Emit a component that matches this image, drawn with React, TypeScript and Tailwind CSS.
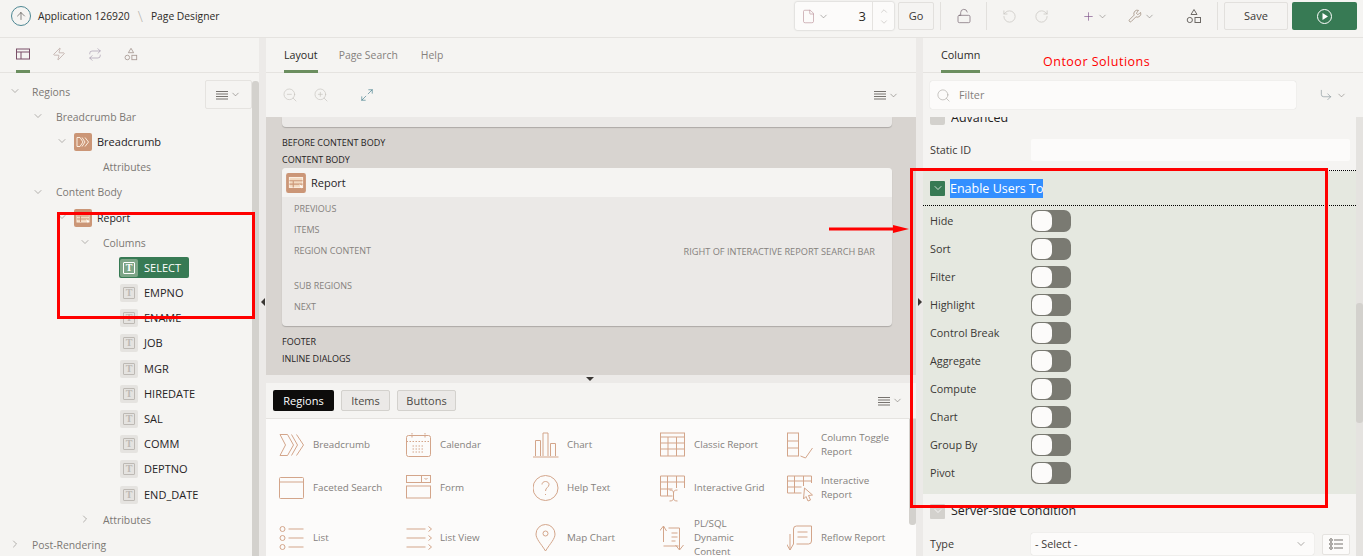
import React from "react";
import { ChevronDown, ChevronRight, ChevronUp, Search, RotateCcw, RotateCw, Plus, Wrench, LockOpen, File, ZoomIn, ZoomOut, Maximize2, Zap, Repeat, ArrowUp, CornerDownRight } from "lucide-react";

const Shapes = ({ c = "#7a7672" }: { c?: string }) => (
  <svg width="16" height="16" viewBox="0 0 16 16" fill="none" stroke={c} strokeWidth="1">
    <path d="M8 1.5 L11 6.5 H5 Z" />
    <circle cx="3.8" cy="12" r="2.6" />
    <rect x="9" y="9.5" width="5.5" height="5" />
  </svg>
);

const Hamburger = () => (
  <svg width="12" height="10" viewBox="0 0 12 10" stroke="#77736f" strokeWidth="1">
    <path d="M0 1.5H12M0 4H12M0 6.5H12M0 9H12" />
  </svg>
);

const MenuBtn = () => (
  <span className="flex items-center gap-[2px]">
    <Hamburger />
    <ChevronDown size={11} color="#77736f" strokeWidth={1.3} />
  </span>
);

const TreeTab = ({ active, children }: { active?: boolean; children: React.ReactNode }) => (
  <div className={`h-[35px] w-[14px] flex items-center justify-center border-b-[3px] ${active ? "border-[#6b8e5f]" : "border-transparent"}`}>{children}</div>
);

const RegionIcon = ({ kind }: { kind: "crumb" | "report" }) => (
  <span className="w-[18px] h-[18px] rounded-[2px] bg-[#cb9677] flex items-center justify-center shrink-0">
    {kind === "crumb" ? (
      <svg width="14" height="12" viewBox="0 0 14 12" fill="none" stroke="#fbeee0" strokeWidth="1">
        <path d="M1 1.5H4L7 6L4 10.5H1V1.5ZM6 1.5L9 6L6 10.5M9 1.5L12.5 6L9 10.5" />
      </svg>
    ) : (
      <svg width="14" height="12" viewBox="0 0 14 12" fill="none" stroke="#fbeee0" strokeWidth="1">
        <rect x="1" y="1" width="12" height="9" fill="#f2d9c0" />
        <path d="M1 4H13M1 7H13M4.5 4V10" stroke="#cb9677" />
        <path d="M10 7L13.5 10L11.5 10.2L12 12L10 7Z" fill="#fff" stroke="none" />
      </svg>
    )}
  </span>
);

const TIcon = ({ active }: { active?: boolean }) => (
  <span className={`w-[18px] h-[18px] rounded-[2px] flex items-center justify-center shrink-0 ${active ? "bg-[#7da587]" : "bg-[#e5e3e0]"}`}>
    <span className={`w-[12px] h-[12px] border rounded-[1px] flex items-center justify-center text-[10px] leading-none font-['Liberation_Serif',serif] font-bold ${active ? "border-white text-white" : "border-[#bdb9b4] text-[#bdb9b4]"}`}>T</span>
  </span>
);

const Row = ({ pl, caret, cx = 0, children }: { pl: number; caret?: "down" | "right"; cx?: number; children: React.ReactNode }) => (
  <div className="h-[25.2px] flex items-center relative" style={{ paddingLeft: pl }}>
    {caret && (
      <span className="absolute top-[6px]" style={{ left: cx - 6 }}>
        {caret === "down" ? <ChevronDown size={12} color="#85817d" strokeWidth={1.2} /> : <ChevronRight size={12} color="#85817d" strokeWidth={1.2} />}
      </span>
    )}
    {children}
  </div>
);

const Lbl = ({ children }: { children: React.ReactNode }) => <span className="text-[10.4px] text-[#7c7874]">{children}</span>;
const Dark = ({ children }: { children: React.ReactNode }) => <span className="text-[11px] text-[#26231f]">{children}</span>;

const columns = ["EMPNO", "ENAME", "JOB", "MGR", "HIREDATE", "SAL", "COMM", "DEPTNO", "END_DATE"];
const toggles = ["Hide", "Sort", "Filter", "Highlight", "Control Break", "Aggregate", "Compute", "Chart", "Group By", "Pivot"];

const S = { fill: "none", stroke: "#d3a58a", strokeWidth: 1 };
const G = ({ children }: { children: React.ReactNode }) => (
  <svg width="26" height="28" viewBox="1.5 0 26 28" className="shrink-0" {...S}>{children}</svg>
);

const icons: Record<string, React.ReactNode> = {
  Breadcrumb: <G><path d="M2.5 3.5H10L16 14L10 24.5H2.5L8 14ZM14 3.5L20 14L14 24.5M19 3.5L26 14L19 24.5" /></G>,
  Calendar: <G><rect x="2" y="4.5" width="24" height="21" rx="2" /><path d="M2 10.5H26M7.5 2V7M20.5 2V7M8 15H20M8 18H20M8 21H20" strokeDasharray="1.5 1.5" /></G>,
  Chart: <G><path d="M1 26H27M4 25V9.5H9V25M11.5 25V2H16.5V25M19 25V12.5H24V25" /></G>,
  "Classic Report": <G><rect x="2" y="2" width="24" height="23" /><path d="M2 6H26M2 12H26M2 18H26M9.5 6V25M18 6V25" /></G>,
  "Faceted Search": <G><rect x="2" y="3.5" width="24" height="21" rx="1" /><path d="M2 8H26" /></G>,
  Form: <G><rect x="2" y="1.5" width="24" height="7" /><path d="M17 1.5V8.5M20 4L21.5 5.5L23 4" /><rect x="2" y="12" width="24" height="12" /></G>,
  "Help Text": <G><circle cx="14" cy="14" r="12.5" /><path d="M10.5 10.5C10.5 6.5 17.5 6.5 17.5 10.5C17.5 13.5 14 13.5 14 17M14 20V21" /></G>,
  "Interactive Grid": <G><path d="M2 2H26V14M2 2V22H14M2 8H26M2 15H14M9 2V22M18 2V14M11 16C14 16 15 17 15 19C15 17 16 16 19 16M11 27C14 27 15 26 15 24C15 26 16 27 19 27M15 19V24" /></G>,
  List: <G><circle cx="5" cy="5" r="2.5" /><circle cx="5" cy="14" r="2.5" /><circle cx="5" cy="23" r="2.5" /><path d="M11 5H26M11 14H26M11 23H26" /></G>,
  "List View": <G><path d="M2 5H21M2 14H21M2 23H21M24 2.5L27 5L24 7.5M24 11.5L27 14L24 16.5M24 20.5L27 23L24 25.5" /></G>,
  "Map Chart": <G><path d="M14 27C9 19 4.5 15 4.5 10A9.5 9.5 0 0 1 23.5 10C23.5 15 19 19 14 27Z" /><circle cx="14" cy="9.5" r="2.5" /></G>,
  "Reflow Report": <G><path d="M8 20V5A3 3 0 0 1 11 2H26V17A3 3 0 0 1 23 20H11M12 8H22M12 13H22M1 20L4.5 26L8 20M4.5 10V26" /></G>,
};
const iconsRight: Record<string, React.ReactNode> = {
  "PL/SQL": <G><path d="M1 7L5 2L8 7M5 2V18M10 4H21V19M5 22H20M13 9H19M13 13H19M13 17H17M17 21L21 26L25 21M21 4V26" /></G>,
  "Column Toggle": <G><rect x="2" y="2" width="11" height="23" /><path d="M2 10H13M2 17H13M15 25L20 27L27 17" /></G>,
  Interactive: <G><path d="M2 2H26V9M2 2V19H16M2 7H26M2 13H16M9 2V19M18 2V12" /><path d="M19 14L27 21L23 21.5L25 26L22.5 27L20.5 22.5L18 25Z" /></G>,
};

type Item = { icon: React.ReactNode; label: React.ReactNode };
const gallery: Item[] = [
  { icon: icons.Breadcrumb, label: "Breadcrumb" },
  { icon: icons.Calendar, label: "Calendar" },
  { icon: icons.Chart, label: "Chart" },
  { icon: icons["Classic Report"], label: "Classic Report" },
  { icon: iconsRight["Column Toggle"], label: <>Column Toggle<br />Report</> },
  { icon: icons["Faceted Search"], label: "Faceted Search" },
  { icon: icons.Form, label: "Form" },
  { icon: icons["Help Text"], label: "Help Text" },
  { icon: icons["Interactive Grid"], label: "Interactive Grid" },
  { icon: iconsRight.Interactive, label: <>Interactive<br />Report</> },
  { icon: icons.List, label: "List" },
  { icon: icons["List View"], label: "List View" },
  { icon: icons["Map Chart"], label: "Map Chart" },
  { icon: iconsRight["PL/SQL"], label: <>PL/SQL<br />Dynamic<br />Content</> },
  { icon: icons["Reflow Report"], label: "Reflow Report" },
];

const Sep = () => <div className="w-px h-[28px] bg-[#e2e0dd] shrink-0" />;
const Btn = ({ className, children }: { className: string; children: React.ReactNode }) => (
  <div className={`h-[28px] rounded-[2px] border border-[#e2e0dd] flex items-center justify-center text-[11px] text-[#3b3835] shrink-0 ${className}`}>{children}</div>
);

export default function App() {
  return (
    <div className="relative w-[1363px] h-[556px] overflow-hidden bg-[#f5f4f2] font-['Open_Sans',sans-serif] text-[11px] leading-[14px]">
      {/* header */}
      <header className="h-[38px] border-b border-[#e5e3e0] flex items-center pl-[11px] pr-[6px] pb-[7px] pt-[2px]">
        <span className="w-[20px] h-[20px] rounded-full border border-[#4d8793] flex items-center justify-center shrink-0">
          <ArrowUp size={12} color="#3c3936" strokeWidth={1.2} />
        </span>
        <span className="ml-[7px] text-[10.3px] text-[#2c2926]">Application 126920</span>
        <span className="ml-[8px] text-[#b8b4b0] text-[15px] font-light">\</span>
        <span className="ml-[8px] text-[10.3px] text-[#2c2926]">Page Designer</span>
        <div className="flex-1" />
        <div className="h-[28px] w-[99px] bg-[#fcfbfa] rounded-[2px] shadow-[0_0_2px_rgba(0,0,0,0.25)] flex items-center shrink-0">
          <div className="flex items-center pl-[6px] gap-[2px]">
            <File size={15} color="#b98f96" strokeWidth={1} />
            <ChevronDown size={11} color="#77736f" strokeWidth={1.2} />
          </div>
          <span className="ml-auto mr-[6px] text-[13px] text-[#2c2926]">3</span>
          <div className="w-[22px] h-full border-l border-[#e5e3e0] flex flex-col items-center justify-center gap-[1px]">
            <ChevronUp size={10} color="#b0aca8" strokeWidth={1.2} />
            <ChevronDown size={10} color="#b0aca8" strokeWidth={1.2} />
          </div>
        </div>
        <Btn className="w-[36px] ml-[4px]">Go</Btn>
        <div className="ml-[6px]"><Sep /></div>
        <LockOpen size={16} color="#6f5f6b" strokeWidth={1} className="ml-[15px] shrink-0" />
        <div className="ml-[14px]"><Sep /></div>
        <RotateCcw size={15} color="#c5c2be" strokeWidth={1.1} className="ml-[15px] shrink-0" />
        <RotateCw size={15} color="#c5c2be" strokeWidth={1.1} className="ml-[17px] shrink-0" />
        <div className="ml-[33px] flex items-center gap-[2px] shrink-0"><Plus size={13} color="#7b4f88" strokeWidth={1.2} /><ChevronDown size={11} color="#77736f" strokeWidth={1.2} /></div>
        <div className="ml-[20px] flex items-center gap-[2px] shrink-0"><Wrench size={14} color="#8b7562" strokeWidth={1.1} /><ChevronDown size={11} color="#77736f" strokeWidth={1.2} /></div>
        <div className="ml-[31px] shrink-0"><Shapes c="#6d6965" /></div>
        <div className="ml-[15px]"><Sep /></div>
        <Btn className="w-[64px] ml-[6px]">Save</Btn>
        <div className="w-[65px] h-[28px] ml-[4px] rounded-[2px] bg-[#377a54] flex items-center justify-center shrink-0">
          <span className="w-[15px] h-[15px] rounded-full border-[1.5px] border-white flex items-center justify-center">
            <svg width="6" height="7" viewBox="0 0 6 7"><path d="M0.5 0L6 3.5L0.5 7Z" fill="#fff" /></svg>
          </span>
        </div>
      </header>

      <div className="flex h-[518px]">
        {/* left */}
        <aside className="w-[259px] shrink-0 flex flex-col">
          <div className="h-[35px] border-b border-[#e5e3e0] flex pl-[16px] gap-[22px] shrink-0">
            <TreeTab active>
              <svg width="14" height="12" viewBox="0 0 14 12" fill="none" stroke="#7a4f68" strokeWidth="1"><rect x="0.5" y="1" width="13" height="10" /><path d="M0.5 4H13.5M5 4V11" /></svg>
            </TreeTab>
            <TreeTab><Zap size={14} color="#a8918c" strokeWidth={1} /></TreeTab>
            <TreeTab><Repeat size={15} color="#9a8ba3" strokeWidth={1} /></TreeTab>
            <TreeTab><Shapes c="#a89a95" /></TreeTab>
          </div>
          <div className="flex flex-1 min-h-0 relative">
            <div className="flex-1 pt-[6px] overflow-hidden">
              <Row pl={32} caret="down" cx={15}><Lbl>Regions</Lbl></Row>
              <Row pl={56} caret="down" cx={38}><Lbl>Breadcrumb Bar</Lbl></Row>
              <Row pl={74} caret="down" cx={62}><RegionIcon kind="crumb" /><span className="ml-[5px]"><Dark>Breadcrumb</Dark></span></Row>
              <Row pl={103}><Lbl>Attributes</Lbl></Row>
              <Row pl={56} caret="down" cx={38}><Lbl>Content Body</Lbl></Row>
              <Row pl={74} caret="down" cx={62}><RegionIcon kind="report" /><span className="ml-[5px] text-[10.5px] text-[#26231f]">Report</span></Row>
              <Row pl={103} caret="down" cx={85}><Lbl>Columns</Lbl></Row>
              <Row pl={119}>
                <span className="flex items-center h-[21px] w-[70px] bg-[#377a54] rounded-[2px] pl-[1px]">
                  <TIcon active />
                  <span className="ml-[6px] text-white">SELECT</span>
                </span>
              </Row>
              {columns.map((c) => (
                <Row key={c} pl={120}><TIcon /><span className="ml-[6px]"><Dark>{c}</Dark></span></Row>
              ))}
              <Row pl={103} caret="right" cx={85}><Lbl>Attributes</Lbl></Row>
              <Row pl={32} caret="right" cx={15}><Lbl>Post-Rendering</Lbl></Row>
            </div>
            <div className="w-[7px] mt-[8px] bg-[#d3d1cd] rounded-t-[3px]" />
            <div className="absolute right-[7px] top-[7px] w-[47px] h-[29px] border border-[#e5e3e0] rounded-[2px] flex items-center justify-center">
              <MenuBtn />
            </div>
          </div>
        </aside>

        {/* splitter */}
        <div className="w-[7px] shrink-0 bg-[#eceae8] flex items-center justify-center pt-[9px]">
          <span className="w-0 h-0 border-y-[4px] border-y-transparent border-r-[4px] border-r-[#3a3734]" />
        </div>

        {/* middle */}
        <main className="w-[650px] shrink-0 flex flex-col">
          <div className="h-[35px] border-b border-[#e5e3e0] flex pl-[18px] shrink-0 text-[10.7px]">
            <div className="h-[35px] flex items-center border-b-[3px] border-[#6b8e5f] text-[#2c2926] pt-[2px]">Layout</div>
            <div className="h-[35px] ml-[21px] flex items-center text-[#85817d] pb-[2px] text-[10.4px]">Page Search</div>
            <div className="h-[35px] ml-[23px] flex items-center text-[#85817d] pb-[2px] text-[10.4px]">Help</div>
          </div>
          <div className="h-[44px] shrink-0 flex items-center pl-[16px] pr-[17px]">
            <ZoomOut size={16} color="#c5c2be" strokeWidth={1} />
            <ZoomIn size={16} color="#c5c2be" strokeWidth={1} className="ml-[15px]" />
            <Maximize2 size={14} color="#2f6f80" strokeWidth={1} className="ml-[31px]" />
            <div className="ml-auto"><MenuBtn /></div>
          </div>
          <div className="h-[258px] shrink-0 bg-[#d8d4d0] pl-[16px] pr-[24px] overflow-hidden">
            <div className="h-[10px] bg-[#ebe9e7] rounded-b-[4px] shadow-[0_1px_1px_rgba(0,0,0,0.2)]" />
            <div className="text-[9px] leading-[17px] text-[#26231f] pt-[7px]">BEFORE CONTENT BODY</div>
            <div className="text-[9px] leading-[17px] text-[#26231f]">CONTENT BODY</div>
            <div className="h-[158px] bg-[#ebe9e7] rounded-[4px] shadow-[0_1px_1px_rgba(0,0,0,0.2)] overflow-hidden">
              <div className="h-[29px] bg-[#f5f4f2] flex items-center pl-[5px]">
                <span className="scale-110"><RegionIcon kind="report" /></span>
                <span className="ml-[6px] text-[#26231f]">Report</span>
              </div>
              <div className="pl-[12px] pr-[17px] pt-[1px] text-[9px] text-[#85817d] relative">
                <div className="h-[21px] flex items-center">PREVIOUS</div>
                <div className="h-[21px] flex items-center">ITEMS</div>
                <div className="h-[21px] flex items-center">REGION CONTENT</div>
                <div className="h-[14px]" />
                <div className="h-[21px] flex items-center">SUB REGIONS</div>
                <div className="h-[21px] flex items-center">NEXT</div>
                <div className="absolute right-[17px] top-[48px] text-[9.2px]">RIGHT OF INTERACTIVE REPORT SEARCH BAR</div>
              </div>
            </div>
            <div className="text-[9px] leading-[17px] text-[#26231f] pt-[7px]">FOOTER</div>
            <div className="text-[9px] leading-[17px] text-[#26231f]">INLINE DIALOGS</div>
          </div>
          <div className="h-[8px] shrink-0 bg-[#eceae8] flex justify-center items-center">
            <span className="w-0 h-0 border-x-[4px] border-x-transparent border-t-[4px] border-t-[#3a3734] ml-[-2px]" />
          </div>
          <div className="h-[36px] shrink-0 border-b border-[#e5e3e0] flex items-center pl-[7px] pr-[13px] gap-[7px]">
            <div className="h-[21px] w-[61px] rounded-[2px] bg-[#0d0c0b] text-white flex items-center justify-center">Regions</div>
            <div className="h-[21px] w-[49px] rounded-[2px] bg-[#ebe9e7] border border-[#d3d1cd] text-[#4c4945] flex items-center justify-center">Items</div>
            <div className="h-[21px] w-[59px] rounded-[2px] bg-[#ebe9e7] border border-[#d3d1cd] text-[#4c4945] flex items-center justify-center">Buttons</div>
            <div className="ml-auto"><MenuBtn /></div>
          </div>
          <div className="flex-1 min-h-0 bg-[#fcfbfa] flex overflow-hidden">
            <div className="flex-1 pl-[13px] pt-[11px]">
              <div className="grid grid-cols-[127px_127px_127px_127px_120px] auto-rows-min">
                {gallery.map((g, i) => (
                  <div key={i} className={`flex items-center gap-[8px] ${i < 5 ? "h-[30px] mb-[13px]" : i < 10 ? "h-[30px] mb-[14px]" : "h-[42px]"}`}>
                    {g.icon}
                    <span className="text-[9.8px] text-[#85817d] leading-[14px]">{g.label}</span>
                  </div>
                ))}
              </div>
            </div>
            <div className="w-[7px] shrink-0 h-[106px] bg-[#d3d1cd] rounded-b-[3px]" />
          </div>
        </main>

        {/* splitter */}
        <div className="w-[7px] shrink-0 bg-[#eceae8] flex items-center justify-center pt-[9px]">
          <span className="w-0 h-0 border-y-[4px] border-y-transparent border-l-[4px] border-l-[#3a3734]" />
        </div>

        {/* right */}
        <section className="flex-1 min-w-0 flex flex-col text-[10.8px]">
          <div className="h-[35px] border-b border-[#e5e3e0] pl-[18px] shrink-0 flex">
            <div className="h-[35px] flex items-center border-b-[3px] border-[#6b8e5f] text-[#2c2926] pt-[2px]">Column</div>
          </div>
          <div className="h-[44px] shrink-0 flex items-center pl-[7px] pr-[16px]">
            <div className="w-[366px] h-[28px] bg-[#fcfbfa] rounded-[2px] shadow-[0_0_1px_rgba(0,0,0,0.2)] flex items-center pl-[6px]">
              <Search size={15} color="#a8a5a1" strokeWidth={1} />
              <span className="ml-[8px] text-[#85817d]">Filter</span>
            </div>
            <div className="ml-auto flex items-center gap-[3px]">
              <CornerDownRight size={14} color="#7a8a90" strokeWidth={1} />
              <ChevronDown size={11} color="#77736f" strokeWidth={1.2} />
            </div>
          </div>
          <div className="flex-1 min-h-0 flex overflow-hidden">
            <div className="flex-1 min-w-0">
              <div className="h-[8px] flex pl-[7px] relative overflow-visible">
                <span className="w-[15px] h-[8px] bg-[#d3d1cd] rounded-b-[2px]" />
                <span className="ml-[6px] mt-[-7px] text-[12.5px] leading-[16px] font-medium text-[#26231f] h-[15px] overflow-hidden">Advanced</span>
              </div>
              <div className="h-[46px] flex items-center pl-[7px] pr-[6px] pt-[5px] border-b border-dotted border-black">
                <span className="w-[101px] text-[#3b3835]">Static ID</span>
                <span className="flex-1 h-[22px] bg-[#fcfbfa] rounded-[2px]" />
              </div>
              <div className="bg-[#e5e8e0] h-[323px]">
                <div className="h-[35px] flex items-center pl-[7px] border-b border-dotted border-black">
                  <span className="w-[15px] h-[15px] bg-[#377a54] rounded-[1px] flex items-center justify-center"><ChevronDown size={12} color="#fff" strokeWidth={1.5} /></span>
                  <span className="ml-[5px] text-[12.5px] leading-[19px] font-medium bg-[#338fff] text-white">Enable Users To</span>
                </div>
                <div className="pl-[7px] pt-[1px]">
                  {toggles.map((t) => (
                    <div key={t} className="h-[28px] flex items-center">
                      <span className="w-[101px] text-[#3b3835]">{t}</span>
                      <span className="w-[40px] h-[22px] rounded-[7px] bg-[#7a7a72] pl-[1px] flex items-center">
                        <span className="w-[20px] h-[20px] rounded-[7px] bg-[#fcfbfa]" />
                      </span>
                    </div>
                  ))}
                </div>
              </div>
              <div className="h-[34px] flex items-center pl-[7px]">
                <span className="w-[15px] h-[15px] bg-[#d3d1cd] rounded-[1px] flex items-center justify-center"><ChevronDown size={12} color="#fff" strokeWidth={1.5} /></span>
                <span className="ml-[6px] text-[12.5px] leading-[16px] font-medium text-[#26231f]">Server-side Condition</span>
              </div>
              <div className="h-[32px] flex items-center pl-[7px]">
                <span className="w-[101px] text-[#3b3835]">Type</span>
                <span className="w-[283px] h-[22px] bg-[#fcfbfa] rounded-[2px] shadow-[0_0_1px_rgba(0,0,0,0.2)] flex items-center pl-[4px] pr-[7px] justify-between text-[#3b3835]">
                  - Select -
                  <ChevronDown size={12} color="#77736f" strokeWidth={1.2} />
                </span>
                <span className="ml-[8px] w-[28px] h-[21px] bg-[#fcfbfa] border border-[#e5e3e0] rounded-[2px] flex items-center justify-center">
                  <svg width="14" height="12" viewBox="0 0 14 12" fill="none" stroke="#77736f" strokeWidth="1"><circle cx="2" cy="2" r="1.3" /><circle cx="2" cy="6" r="1.3" /><circle cx="2" cy="10" r="1.3" /><path d="M5 2H14M5 6H14M5 10H14" /></svg>
                </span>
              </div>
            </div>
            <div className="w-[7px] shrink-0 bg-[#e5e3e0] pt-[186px]">
              <div className="h-[120px] bg-[#d3d1cd] rounded-[3px]" />
            </div>
          </div>
        </section>
      </div>

      {/* annotations drawn over the screenshot */}
      <div className="absolute left-[57px] top-[212px] w-[198px] h-[107px] border-[3px] border-[#ff0000] pointer-events-none" />
      <div className="absolute left-[910px] top-[168px] w-[418px] h-[340px] border-[3px] border-[#ff0000] pointer-events-none" />
      <div className="absolute left-[1043px] top-[54px] text-[12.5px] leading-[16px] tracking-[0.5px] text-[#ff0000]">Ontoor Solutions</div>
      <svg className="absolute left-[829px] top-[224px]" width="82" height="10" viewBox="0 0 82 10">
        <path d="M0 3.6H66V6.4H0Z" fill="#ff0000" />
        <path d="M64 1L80 5L64 9Z" fill="#ff0000" />
      </svg>
    </div>
  );
}
